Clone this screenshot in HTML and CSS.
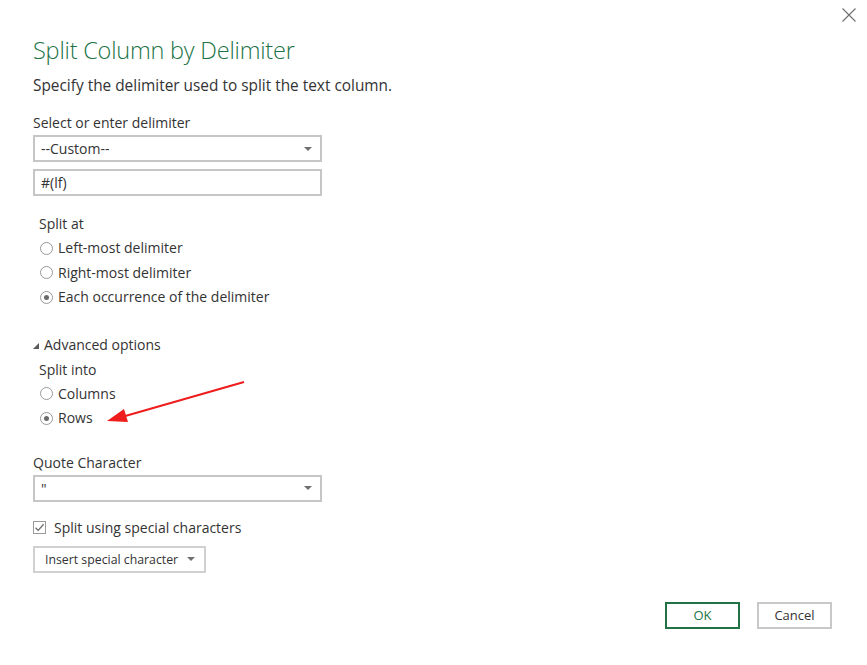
FILE: index.html
```html
<!DOCTYPE html>
<html lang="en">
<head>
<meta charset="utf-8">
<title>Split Column by Delimiter</title>
<link rel="stylesheet" href="styles.css">
</head>
<body>
<div class="dialog">
  <button class="close" aria-label="Close">
    <svg width="16" height="16" viewBox="0 0 16 16"><path d="M1.5 1.5 L14.5 14.5 M14.5 1.5 L1.5 14.5" stroke="#6e6e6e" stroke-width="1.1" fill="none"/></svg>
  </button>

  <h1 class="title">Split Column by Delimiter</h1>
  <p class="subtitle">Specify the delimiter used to split the text column.</p>

  <div class="label">Select or enter delimiter</div>
  <div class="select">
    <span>--Custom--</span>
    <span class="caret"></span>
  </div>
  <div class="input">#(lf)</div>

  <div class="group">
    <div class="label">Split at</div>
    <div class="radio"><span class="circle"></span>Left-most delimiter</div>
    <div class="radio"><span class="circle"></span>Right-most delimiter</div>
    <div class="radio"><span class="circle checked"></span>Each occurrence of the delimiter</div>
  </div>

  <div class="advanced"><span class="tri"></span>Advanced options</div>
  <div class="group tight">
    <div class="label">Split into</div>
    <div class="radio"><span class="circle"></span>Columns</div>
    <div class="radio"><span class="circle checked"></span>Rows</div>
  </div>

  <div class="label quote-label">Quote Character</div>
  <div class="select">
    <span>"</span>
    <span class="caret"></span>
  </div>

  <div class="check"><span class="box">
    <svg width="13" height="13" viewBox="0 0 13 13"><path d="M2.5 6.8 L5.2 9.4 L10.6 3.2" stroke="#6a6a6a" stroke-width="1.3" fill="none"/></svg>
  </span>Split using special characters</div>

  <div class="insert">Insert special character<span class="caret small"></span></div>

  <div class="actions">
    <button class="btn ok">OK</button>
    <button class="btn">Cancel</button>
  </div>

  <svg class="annot" width="160" height="60" viewBox="0 0 160 60">
    <line x1="144" y1="9" x2="20" y2="44.5" stroke="#ee1c1c" stroke-width="2"/>
    <polygon points="7,48 24,36 28,49" fill="#ee1c1c"/>
  </svg>
</div>
</body>
</html>
```
FILE: styles.css
```css
* { box-sizing: border-box; }
html, body { margin: 0; padding: 0; background: #ffffff; }
body {
  font-family: "Open Sans", "Noto Sans", "Liberation Sans", sans-serif;
  font-size: 14px;
  color: #333333;
}
.dialog {
  position: relative;
  width: 867px;
  height: 665px;
  padding: 32px 33px 0 33px;
}
.close {
  position: absolute;
  top: 6px;
  right: 9px;
  width: 18px;
  height: 18px;
  padding: 0;
  border: 0;
  background: transparent;
  display: flex;
  align-items: center;
  justify-content: center;
}
.title {
  margin: 0;
  font-weight: 300;
  font-size: 23.5px;
  line-height: 36px;
  color: #217346;
  letter-spacing: -0.2px;
}
.subtitle {
  margin: 6px 0 0 0;
  font-size: 15.4px;
  line-height: 24px;
  color: #333333;
}
.label {
  line-height: 24px;
}
.subtitle + .label { margin-top: 13px; }
.select, .input {
  width: 289px;
  height: 27px;
  border: 2px solid #c6c6c6;
  display: flex;
  align-items: center;
  justify-content: space-between;
  padding: 0 8px 0 6px;
  line-height: 23px;
}
.input { margin-top: 7px; }
.caret {
  width: 0;
  height: 0;
  border-left: 4px solid transparent;
  border-right: 4px solid transparent;
  border-top: 4px solid #6f6f6f;
}
.group {
  padding-left: 6px;
  margin-top: 16px;
}
.radio {
  display: flex;
  align-items: center;
  height: 24.5px;
  line-height: 24px;
}
.circle {
  width: 13px;
  height: 13px;
  border: 1px solid #9a9a9a;
  border-radius: 50%;
  margin-left: 1px;
  margin-right: 5px;
  display: flex;
  align-items: center;
  justify-content: center;
  flex: none;
}
.circle.checked::after {
  content: "";
  width: 5px;
  height: 5px;
  border-radius: 50%;
  background: #6a6a6a;
}
.advanced {
  display: flex;
  align-items: center;
  margin-top: 23px;
  line-height: 24px;
}
.tri {
  width: 0;
  height: 0;
  border-left: 6px solid transparent;
  border-bottom: 6px solid #595959;
  margin-right: 5px;
  margin-top: 2px;
}
.group.tight { margin-top: 1px; }
.quote-label { margin-top: 20px; }
.check {
  display: flex;
  align-items: center;
  margin-top: 14px;
  line-height: 24px;
}
.box {
  width: 13px;
  height: 13px;
  border: 1px solid #9a9a9a;
  margin-right: 8px;
  display: flex;
  align-items: center;
  justify-content: center;
}
.box svg { display: block; margin: -1px; }
.insert {
  display: inline-flex;
  align-items: center;
  margin-top: 6px;
  height: 27px;
  padding: 0 9px 0 10px;
  border: 2px solid #d0d0d0;
  font-size: 12.3px;
}
.caret.small { margin-left: 9px; }
.actions {
  display: flex;
  justify-content: flex-end;
  gap: 17px;
  margin-top: 29px;
  padding-right: 2px;
}
.btn {
  width: 75px;
  height: 27px;
  background: #ffffff;
  border: 2px solid #c8c8c8;
  font-family: inherit;
  font-size: 13px;
  color: #333333;
  padding: 0;
}
.btn.ok {
  border: 2px solid #217346;
  color: #217346;
}
.annot {
  position: absolute;
  left: 100px;
  top: 373px;
}
```
